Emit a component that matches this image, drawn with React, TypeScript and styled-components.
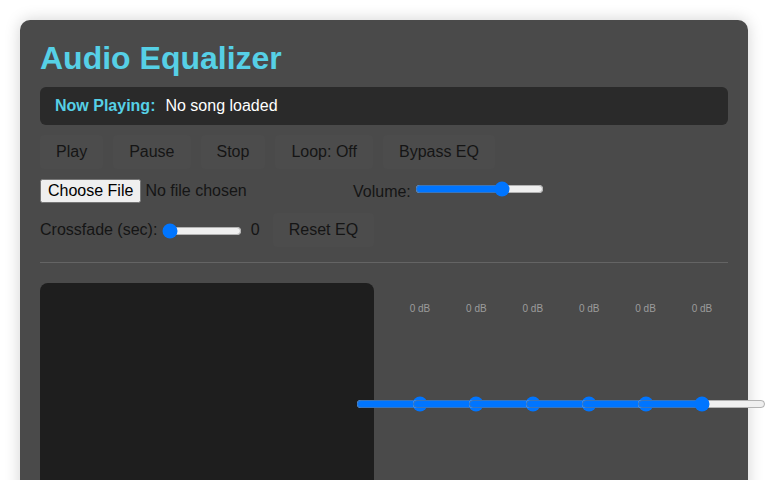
import React from "react";
import styled, { createGlobalStyle } from "styled-components";

const GlobalStyle = createGlobalStyle`
  html, body {
    margin: 0;
    background: #ffffff;
  }
  body {
    padding: 20px;
    font-family: "Liberation Sans", Arial, sans-serif;
    font-size: 16px;
    color: #151515;
  }
`;

const Card = styled.div`
  background: #4a4a4a;
  border-radius: 10px;
  padding: 20px;
  box-shadow: 0 0 16px rgba(0, 0, 0, 0.18);
`;

const Title = styled.h1`
  margin: 0 0 10px;
  font-size: 32px;
  font-weight: bold;
  color: #56d0e6;
  line-height: normal;
`;

const NowPlaying = styled.div`
  background: #2a2a2a;
  border-radius: 6px;
  padding: 10px 15px;
  margin-bottom: 10px;
  display: flex;
  align-items: center;
`;

const NowLabel = styled.span`
  color: #56d0e6;
  font-weight: bold;
  margin-right: 10px;
`;

const NowValue = styled.span`
  color: #ffffff;
`;

const Controls = styled.div`
  display: flex;
  flex-direction: column;
  gap: 10px;
`;

const Row = styled.div`
  display: flex;
  flex-wrap: wrap;
  align-items: center;
  gap: 10px;
`;

const Button = styled.button`
  font-family: inherit;
  font-size: 16px;
  padding: 8px 16px;
  border: none;
  border-radius: 4px;
  background: #4c4c4c;
  color: #151515;
  cursor: pointer;
`;

const FileInput = styled.input`
  font-family: inherit;
  font-size: 16px;
  color: #151515;
`;

const Label = styled.label`
  color: #151515;
`;

const Range = styled.input<{ $w?: number; $align?: string; $ml?: number; $mr?: number }>`
  margin: 0 ${(p) => p.$mr ?? 0}px 0 ${(p) => p.$ml ?? 0}px;
  vertical-align: ${(p) => p.$align ?? "baseline"};
  ${(p) => (p.$w ? `width: ${p.$w}px;` : "")}
`;

const CrossLabel = styled(Label)`
  margin-right: 3px;
`;

const Divider = styled.div`
  height: 1px;
  background: #646464;
  margin: 15px 0 20px;
`;

const EqSection = styled.div`
  display: grid;
  grid-template-columns: 1fr 1fr;
  gap: 20px;
`;

const Visualizer = styled.div`
  background: #1e1e1e;
  border-radius: 8px;
  height: 300px;
`;

const Bands = styled.div`
  display: flex;
  justify-content: space-between;
  padding-top: 20px;
`;

const Band = styled.div`
  width: 52px;
  display: flex;
  flex-direction: column;
  align-items: center;
`;

const Gain = styled.span`
  font-size: 10px;
  color: #9c9c9c;
  line-height: normal;
`;

const SliderWrap = styled.div`
  height: 150px;
  margin-top: 15px;
  width: 100%;
  display: flex;
  align-items: center;
  justify-content: center;
`;

const BandSlider = styled.input`
  flex-shrink: 0;
`;

const bands = ["60Hz", "170Hz", "310Hz", "600Hz", "1kHz", "3kHz"];

export default function App() {
  return (
    <>
      <GlobalStyle />
      <Card>
        <Title>Audio Equalizer</Title>
        <NowPlaying>
          <NowLabel>Now Playing:</NowLabel>
          <NowValue>No song loaded</NowValue>
        </NowPlaying>
        <Controls>
          <Row>
            <Button>Play</Button>
            <Button>Pause</Button>
            <Button>Stop</Button>
            <Button>Loop: Off</Button>
            <Button>Bypass EQ</Button>
          </Row>
          <Row>
            <FileInput type="file" accept="audio/*" />
            <Label>
              Volume:{" "}
              <Range type="range" min={0} max={1} step={0.01} defaultValue={0.7} />
            </Label>
          </Row>
          <Row>
            <CrossLabel>
              Crossfade (sec):
              <Range
                type="range"
                $w={80}
                $align="middle"
                $ml={5}
                $mr={4}
                min={0}
                max={10}
                step={1}
                defaultValue={0}
              />{" "}
              <span>0</span>
            </CrossLabel>
            <Button>Reset EQ</Button>
          </Row>
        </Controls>
        <Divider />
        <EqSection>
          <Visualizer />
          <Bands>
            {bands.map((b) => (
              <Band key={b} title={b}>
                <Gain>0 dB</Gain>
                <SliderWrap>
                  <BandSlider type="range" min={-12} max={12} step={0.1} defaultValue={0} />
                </SliderWrap>
              </Band>
            ))}
          </Bands>
        </EqSection>
      </Card>
    </>
  );
}
